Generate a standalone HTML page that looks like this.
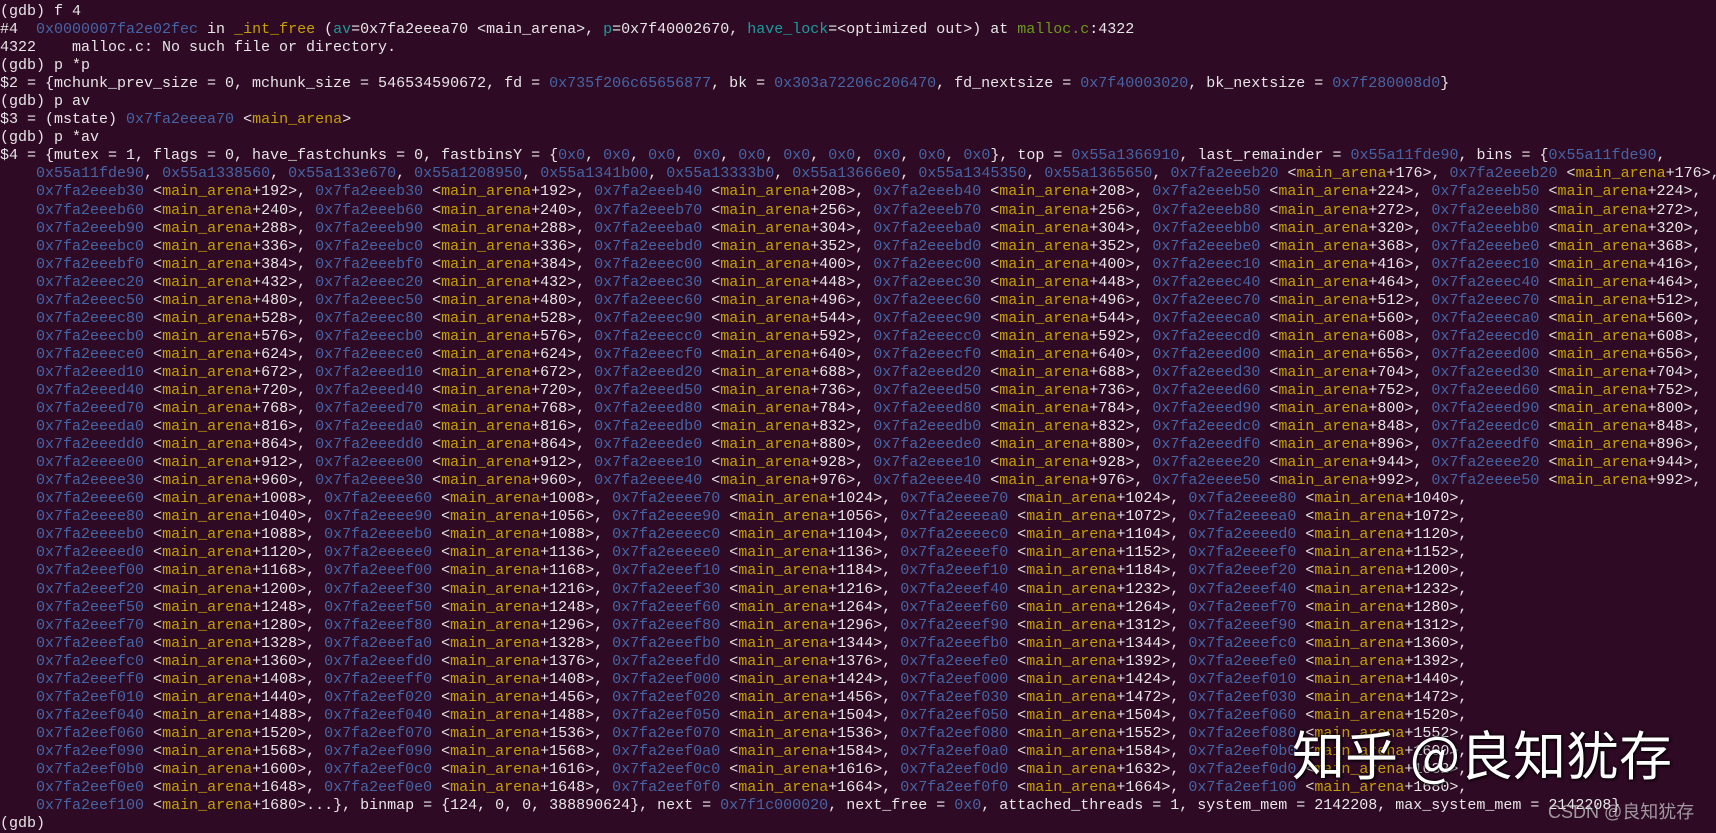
<!DOCTYPE html>
<html><head><meta charset="utf-8"><style>
html,body{margin:0;padding:0;background:#2f0a24;width:1716px;height:832px;overflow:hidden}
pre{margin:0;position:absolute;left:0;top:3px;font-family:"Liberation Mono",monospace;font-size:15px;line-height:18.05px;color:#e6e6e6;white-space:pre;letter-spacing:0}
b,i{font-weight:normal;font-style:normal}
b{color:#4565a5}
i{color:#c4a000}
.c{color:#1b9b9c}
.g{color:#6a9a1a}
.wm{position:absolute;left:1292px;top:722px;font-family:"Noto Sans CJK SC",sans-serif;font-size:53px;color:#fff;text-shadow:0 0 3px #000,1px 1px 3px #000;line-height:62px;white-space:nowrap}
.cs{position:absolute;left:1548px;top:800px;font-family:"Liberation Sans","Noto Sans CJK SC",sans-serif;font-size:18px;color:rgba(200,200,200,.75);white-space:nowrap;line-height:24px}
</style></head><body>
<pre>(gdb) f 4
#4  <b>0x0000007fa2e02fec</b> in <i>_int_free</i> (<span class="c">av</span>=0x7fa2eeea70 &lt;main_arena&gt;, <span class="c">p</span>=0x7f40002670, <span class="c">have_lock</span>=&lt;optimized out&gt;) at <span class="g">malloc.c</span>:4322
4322    malloc.c: No such file or directory.
(gdb) p *p
$2 = {mchunk_prev_size = 0, mchunk_size = 546534590672, fd = <b>0x735f206c65656877</b>, bk = <b>0x303a72206c206470</b>, fd_nextsize = <b>0x7f40003020</b>, bk_nextsize = <b>0x7f280008d0</b>}
(gdb) p av
$3 = (mstate) <b>0x7fa2eeea70</b> &lt;<i>main_arena</i>&gt;
(gdb) p *av
$4 = {mutex = 1, flags = 0, have_fastchunks = 0, fastbinsY = {<b>0x0</b>, <b>0x0</b>, <b>0x0</b>, <b>0x0</b>, <b>0x0</b>, <b>0x0</b>, <b>0x0</b>, <b>0x0</b>, <b>0x0</b>, <b>0x0</b>}, top = <b>0x55a1366910</b>, last_remainder = <b>0x55a11fde90</b>, bins = {<b>0x55a11fde90</b>,
    <b>0x55a11fde90</b>, <b>0x55a1338560</b>, <b>0x55a133e670</b>, <b>0x55a1208950</b>, <b>0x55a1341b00</b>, <b>0x55a13333b0</b>, <b>0x55a13666e0</b>, <b>0x55a1345350</b>, <b>0x55a1365650</b>, <b>0x7fa2eeeb20</b> &lt;<i>main_arena</i>+176&gt;, <b>0x7fa2eeeb20</b> &lt;<i>main_arena</i>+176&gt;,
    <b>0x7fa2eeeb30</b> &lt;<i>main_arena</i>+192&gt;, <b>0x7fa2eeeb30</b> &lt;<i>main_arena</i>+192&gt;, <b>0x7fa2eeeb40</b> &lt;<i>main_arena</i>+208&gt;, <b>0x7fa2eeeb40</b> &lt;<i>main_arena</i>+208&gt;, <b>0x7fa2eeeb50</b> &lt;<i>main_arena</i>+224&gt;, <b>0x7fa2eeeb50</b> &lt;<i>main_arena</i>+224&gt;,
    <b>0x7fa2eeeb60</b> &lt;<i>main_arena</i>+240&gt;, <b>0x7fa2eeeb60</b> &lt;<i>main_arena</i>+240&gt;, <b>0x7fa2eeeb70</b> &lt;<i>main_arena</i>+256&gt;, <b>0x7fa2eeeb70</b> &lt;<i>main_arena</i>+256&gt;, <b>0x7fa2eeeb80</b> &lt;<i>main_arena</i>+272&gt;, <b>0x7fa2eeeb80</b> &lt;<i>main_arena</i>+272&gt;,
    <b>0x7fa2eeeb90</b> &lt;<i>main_arena</i>+288&gt;, <b>0x7fa2eeeb90</b> &lt;<i>main_arena</i>+288&gt;, <b>0x7fa2eeeba0</b> &lt;<i>main_arena</i>+304&gt;, <b>0x7fa2eeeba0</b> &lt;<i>main_arena</i>+304&gt;, <b>0x7fa2eeebb0</b> &lt;<i>main_arena</i>+320&gt;, <b>0x7fa2eeebb0</b> &lt;<i>main_arena</i>+320&gt;,
    <b>0x7fa2eeebc0</b> &lt;<i>main_arena</i>+336&gt;, <b>0x7fa2eeebc0</b> &lt;<i>main_arena</i>+336&gt;, <b>0x7fa2eeebd0</b> &lt;<i>main_arena</i>+352&gt;, <b>0x7fa2eeebd0</b> &lt;<i>main_arena</i>+352&gt;, <b>0x7fa2eeebe0</b> &lt;<i>main_arena</i>+368&gt;, <b>0x7fa2eeebe0</b> &lt;<i>main_arena</i>+368&gt;,
    <b>0x7fa2eeebf0</b> &lt;<i>main_arena</i>+384&gt;, <b>0x7fa2eeebf0</b> &lt;<i>main_arena</i>+384&gt;, <b>0x7fa2eeec00</b> &lt;<i>main_arena</i>+400&gt;, <b>0x7fa2eeec00</b> &lt;<i>main_arena</i>+400&gt;, <b>0x7fa2eeec10</b> &lt;<i>main_arena</i>+416&gt;, <b>0x7fa2eeec10</b> &lt;<i>main_arena</i>+416&gt;,
    <b>0x7fa2eeec20</b> &lt;<i>main_arena</i>+432&gt;, <b>0x7fa2eeec20</b> &lt;<i>main_arena</i>+432&gt;, <b>0x7fa2eeec30</b> &lt;<i>main_arena</i>+448&gt;, <b>0x7fa2eeec30</b> &lt;<i>main_arena</i>+448&gt;, <b>0x7fa2eeec40</b> &lt;<i>main_arena</i>+464&gt;, <b>0x7fa2eeec40</b> &lt;<i>main_arena</i>+464&gt;,
    <b>0x7fa2eeec50</b> &lt;<i>main_arena</i>+480&gt;, <b>0x7fa2eeec50</b> &lt;<i>main_arena</i>+480&gt;, <b>0x7fa2eeec60</b> &lt;<i>main_arena</i>+496&gt;, <b>0x7fa2eeec60</b> &lt;<i>main_arena</i>+496&gt;, <b>0x7fa2eeec70</b> &lt;<i>main_arena</i>+512&gt;, <b>0x7fa2eeec70</b> &lt;<i>main_arena</i>+512&gt;,
    <b>0x7fa2eeec80</b> &lt;<i>main_arena</i>+528&gt;, <b>0x7fa2eeec80</b> &lt;<i>main_arena</i>+528&gt;, <b>0x7fa2eeec90</b> &lt;<i>main_arena</i>+544&gt;, <b>0x7fa2eeec90</b> &lt;<i>main_arena</i>+544&gt;, <b>0x7fa2eeeca0</b> &lt;<i>main_arena</i>+560&gt;, <b>0x7fa2eeeca0</b> &lt;<i>main_arena</i>+560&gt;,
    <b>0x7fa2eeecb0</b> &lt;<i>main_arena</i>+576&gt;, <b>0x7fa2eeecb0</b> &lt;<i>main_arena</i>+576&gt;, <b>0x7fa2eeecc0</b> &lt;<i>main_arena</i>+592&gt;, <b>0x7fa2eeecc0</b> &lt;<i>main_arena</i>+592&gt;, <b>0x7fa2eeecd0</b> &lt;<i>main_arena</i>+608&gt;, <b>0x7fa2eeecd0</b> &lt;<i>main_arena</i>+608&gt;,
    <b>0x7fa2eeece0</b> &lt;<i>main_arena</i>+624&gt;, <b>0x7fa2eeece0</b> &lt;<i>main_arena</i>+624&gt;, <b>0x7fa2eeecf0</b> &lt;<i>main_arena</i>+640&gt;, <b>0x7fa2eeecf0</b> &lt;<i>main_arena</i>+640&gt;, <b>0x7fa2eeed00</b> &lt;<i>main_arena</i>+656&gt;, <b>0x7fa2eeed00</b> &lt;<i>main_arena</i>+656&gt;,
    <b>0x7fa2eeed10</b> &lt;<i>main_arena</i>+672&gt;, <b>0x7fa2eeed10</b> &lt;<i>main_arena</i>+672&gt;, <b>0x7fa2eeed20</b> &lt;<i>main_arena</i>+688&gt;, <b>0x7fa2eeed20</b> &lt;<i>main_arena</i>+688&gt;, <b>0x7fa2eeed30</b> &lt;<i>main_arena</i>+704&gt;, <b>0x7fa2eeed30</b> &lt;<i>main_arena</i>+704&gt;,
    <b>0x7fa2eeed40</b> &lt;<i>main_arena</i>+720&gt;, <b>0x7fa2eeed40</b> &lt;<i>main_arena</i>+720&gt;, <b>0x7fa2eeed50</b> &lt;<i>main_arena</i>+736&gt;, <b>0x7fa2eeed50</b> &lt;<i>main_arena</i>+736&gt;, <b>0x7fa2eeed60</b> &lt;<i>main_arena</i>+752&gt;, <b>0x7fa2eeed60</b> &lt;<i>main_arena</i>+752&gt;,
    <b>0x7fa2eeed70</b> &lt;<i>main_arena</i>+768&gt;, <b>0x7fa2eeed70</b> &lt;<i>main_arena</i>+768&gt;, <b>0x7fa2eeed80</b> &lt;<i>main_arena</i>+784&gt;, <b>0x7fa2eeed80</b> &lt;<i>main_arena</i>+784&gt;, <b>0x7fa2eeed90</b> &lt;<i>main_arena</i>+800&gt;, <b>0x7fa2eeed90</b> &lt;<i>main_arena</i>+800&gt;,
    <b>0x7fa2eeeda0</b> &lt;<i>main_arena</i>+816&gt;, <b>0x7fa2eeeda0</b> &lt;<i>main_arena</i>+816&gt;, <b>0x7fa2eeedb0</b> &lt;<i>main_arena</i>+832&gt;, <b>0x7fa2eeedb0</b> &lt;<i>main_arena</i>+832&gt;, <b>0x7fa2eeedc0</b> &lt;<i>main_arena</i>+848&gt;, <b>0x7fa2eeedc0</b> &lt;<i>main_arena</i>+848&gt;,
    <b>0x7fa2eeedd0</b> &lt;<i>main_arena</i>+864&gt;, <b>0x7fa2eeedd0</b> &lt;<i>main_arena</i>+864&gt;, <b>0x7fa2eeede0</b> &lt;<i>main_arena</i>+880&gt;, <b>0x7fa2eeede0</b> &lt;<i>main_arena</i>+880&gt;, <b>0x7fa2eeedf0</b> &lt;<i>main_arena</i>+896&gt;, <b>0x7fa2eeedf0</b> &lt;<i>main_arena</i>+896&gt;,
    <b>0x7fa2eeee00</b> &lt;<i>main_arena</i>+912&gt;, <b>0x7fa2eeee00</b> &lt;<i>main_arena</i>+912&gt;, <b>0x7fa2eeee10</b> &lt;<i>main_arena</i>+928&gt;, <b>0x7fa2eeee10</b> &lt;<i>main_arena</i>+928&gt;, <b>0x7fa2eeee20</b> &lt;<i>main_arena</i>+944&gt;, <b>0x7fa2eeee20</b> &lt;<i>main_arena</i>+944&gt;,
    <b>0x7fa2eeee30</b> &lt;<i>main_arena</i>+960&gt;, <b>0x7fa2eeee30</b> &lt;<i>main_arena</i>+960&gt;, <b>0x7fa2eeee40</b> &lt;<i>main_arena</i>+976&gt;, <b>0x7fa2eeee40</b> &lt;<i>main_arena</i>+976&gt;, <b>0x7fa2eeee50</b> &lt;<i>main_arena</i>+992&gt;, <b>0x7fa2eeee50</b> &lt;<i>main_arena</i>+992&gt;,
    <b>0x7fa2eeee60</b> &lt;<i>main_arena</i>+1008&gt;, <b>0x7fa2eeee60</b> &lt;<i>main_arena</i>+1008&gt;, <b>0x7fa2eeee70</b> &lt;<i>main_arena</i>+1024&gt;, <b>0x7fa2eeee70</b> &lt;<i>main_arena</i>+1024&gt;, <b>0x7fa2eeee80</b> &lt;<i>main_arena</i>+1040&gt;,
    <b>0x7fa2eeee80</b> &lt;<i>main_arena</i>+1040&gt;, <b>0x7fa2eeee90</b> &lt;<i>main_arena</i>+1056&gt;, <b>0x7fa2eeee90</b> &lt;<i>main_arena</i>+1056&gt;, <b>0x7fa2eeeea0</b> &lt;<i>main_arena</i>+1072&gt;, <b>0x7fa2eeeea0</b> &lt;<i>main_arena</i>+1072&gt;,
    <b>0x7fa2eeeeb0</b> &lt;<i>main_arena</i>+1088&gt;, <b>0x7fa2eeeeb0</b> &lt;<i>main_arena</i>+1088&gt;, <b>0x7fa2eeeec0</b> &lt;<i>main_arena</i>+1104&gt;, <b>0x7fa2eeeec0</b> &lt;<i>main_arena</i>+1104&gt;, <b>0x7fa2eeeed0</b> &lt;<i>main_arena</i>+1120&gt;,
    <b>0x7fa2eeeed0</b> &lt;<i>main_arena</i>+1120&gt;, <b>0x7fa2eeeee0</b> &lt;<i>main_arena</i>+1136&gt;, <b>0x7fa2eeeee0</b> &lt;<i>main_arena</i>+1136&gt;, <b>0x7fa2eeeef0</b> &lt;<i>main_arena</i>+1152&gt;, <b>0x7fa2eeeef0</b> &lt;<i>main_arena</i>+1152&gt;,
    <b>0x7fa2eeef00</b> &lt;<i>main_arena</i>+1168&gt;, <b>0x7fa2eeef00</b> &lt;<i>main_arena</i>+1168&gt;, <b>0x7fa2eeef10</b> &lt;<i>main_arena</i>+1184&gt;, <b>0x7fa2eeef10</b> &lt;<i>main_arena</i>+1184&gt;, <b>0x7fa2eeef20</b> &lt;<i>main_arena</i>+1200&gt;,
    <b>0x7fa2eeef20</b> &lt;<i>main_arena</i>+1200&gt;, <b>0x7fa2eeef30</b> &lt;<i>main_arena</i>+1216&gt;, <b>0x7fa2eeef30</b> &lt;<i>main_arena</i>+1216&gt;, <b>0x7fa2eeef40</b> &lt;<i>main_arena</i>+1232&gt;, <b>0x7fa2eeef40</b> &lt;<i>main_arena</i>+1232&gt;,
    <b>0x7fa2eeef50</b> &lt;<i>main_arena</i>+1248&gt;, <b>0x7fa2eeef50</b> &lt;<i>main_arena</i>+1248&gt;, <b>0x7fa2eeef60</b> &lt;<i>main_arena</i>+1264&gt;, <b>0x7fa2eeef60</b> &lt;<i>main_arena</i>+1264&gt;, <b>0x7fa2eeef70</b> &lt;<i>main_arena</i>+1280&gt;,
    <b>0x7fa2eeef70</b> &lt;<i>main_arena</i>+1280&gt;, <b>0x7fa2eeef80</b> &lt;<i>main_arena</i>+1296&gt;, <b>0x7fa2eeef80</b> &lt;<i>main_arena</i>+1296&gt;, <b>0x7fa2eeef90</b> &lt;<i>main_arena</i>+1312&gt;, <b>0x7fa2eeef90</b> &lt;<i>main_arena</i>+1312&gt;,
    <b>0x7fa2eeefa0</b> &lt;<i>main_arena</i>+1328&gt;, <b>0x7fa2eeefa0</b> &lt;<i>main_arena</i>+1328&gt;, <b>0x7fa2eeefb0</b> &lt;<i>main_arena</i>+1344&gt;, <b>0x7fa2eeefb0</b> &lt;<i>main_arena</i>+1344&gt;, <b>0x7fa2eeefc0</b> &lt;<i>main_arena</i>+1360&gt;,
    <b>0x7fa2eeefc0</b> &lt;<i>main_arena</i>+1360&gt;, <b>0x7fa2eeefd0</b> &lt;<i>main_arena</i>+1376&gt;, <b>0x7fa2eeefd0</b> &lt;<i>main_arena</i>+1376&gt;, <b>0x7fa2eeefe0</b> &lt;<i>main_arena</i>+1392&gt;, <b>0x7fa2eeefe0</b> &lt;<i>main_arena</i>+1392&gt;,
    <b>0x7fa2eeeff0</b> &lt;<i>main_arena</i>+1408&gt;, <b>0x7fa2eeeff0</b> &lt;<i>main_arena</i>+1408&gt;, <b>0x7fa2eef000</b> &lt;<i>main_arena</i>+1424&gt;, <b>0x7fa2eef000</b> &lt;<i>main_arena</i>+1424&gt;, <b>0x7fa2eef010</b> &lt;<i>main_arena</i>+1440&gt;,
    <b>0x7fa2eef010</b> &lt;<i>main_arena</i>+1440&gt;, <b>0x7fa2eef020</b> &lt;<i>main_arena</i>+1456&gt;, <b>0x7fa2eef020</b> &lt;<i>main_arena</i>+1456&gt;, <b>0x7fa2eef030</b> &lt;<i>main_arena</i>+1472&gt;, <b>0x7fa2eef030</b> &lt;<i>main_arena</i>+1472&gt;,
    <b>0x7fa2eef040</b> &lt;<i>main_arena</i>+1488&gt;, <b>0x7fa2eef040</b> &lt;<i>main_arena</i>+1488&gt;, <b>0x7fa2eef050</b> &lt;<i>main_arena</i>+1504&gt;, <b>0x7fa2eef050</b> &lt;<i>main_arena</i>+1504&gt;, <b>0x7fa2eef060</b> &lt;<i>main_arena</i>+1520&gt;,
    <b>0x7fa2eef060</b> &lt;<i>main_arena</i>+1520&gt;, <b>0x7fa2eef070</b> &lt;<i>main_arena</i>+1536&gt;, <b>0x7fa2eef070</b> &lt;<i>main_arena</i>+1536&gt;, <b>0x7fa2eef080</b> &lt;<i>main_arena</i>+1552&gt;, <b>0x7fa2eef080</b> &lt;<i>main_arena</i>+1552&gt;,
    <b>0x7fa2eef090</b> &lt;<i>main_arena</i>+1568&gt;, <b>0x7fa2eef090</b> &lt;<i>main_arena</i>+1568&gt;, <b>0x7fa2eef0a0</b> &lt;<i>main_arena</i>+1584&gt;, <b>0x7fa2eef0a0</b> &lt;<i>main_arena</i>+1584&gt;, <b>0x7fa2eef0b0</b> &lt;<i>main_arena</i>+1600&gt;,
    <b>0x7fa2eef0b0</b> &lt;<i>main_arena</i>+1600&gt;, <b>0x7fa2eef0c0</b> &lt;<i>main_arena</i>+1616&gt;, <b>0x7fa2eef0c0</b> &lt;<i>main_arena</i>+1616&gt;, <b>0x7fa2eef0d0</b> &lt;<i>main_arena</i>+1632&gt;, <b>0x7fa2eef0d0</b> &lt;<i>main_arena</i>+1632&gt;,
    <b>0x7fa2eef0e0</b> &lt;<i>main_arena</i>+1648&gt;, <b>0x7fa2eef0e0</b> &lt;<i>main_arena</i>+1648&gt;, <b>0x7fa2eef0f0</b> &lt;<i>main_arena</i>+1664&gt;, <b>0x7fa2eef0f0</b> &lt;<i>main_arena</i>+1664&gt;, <b>0x7fa2eef100</b> &lt;<i>main_arena</i>+1680&gt;,
    <b>0x7fa2eef100</b> &lt;<i>main_arena</i>+1680&gt;...}, binmap = {124, 0, 0, 388890624}, next = <b>0x7f1c000020</b>, next_free = <b>0x0</b>, attached_threads = 1, system_mem = 2142208, max_system_mem = 2142208}
(gdb) </pre>
<div class="wm">知乎 @良知犹存</div>
<div class="cs">CSDN @良知犹存</div>
</body></html>
